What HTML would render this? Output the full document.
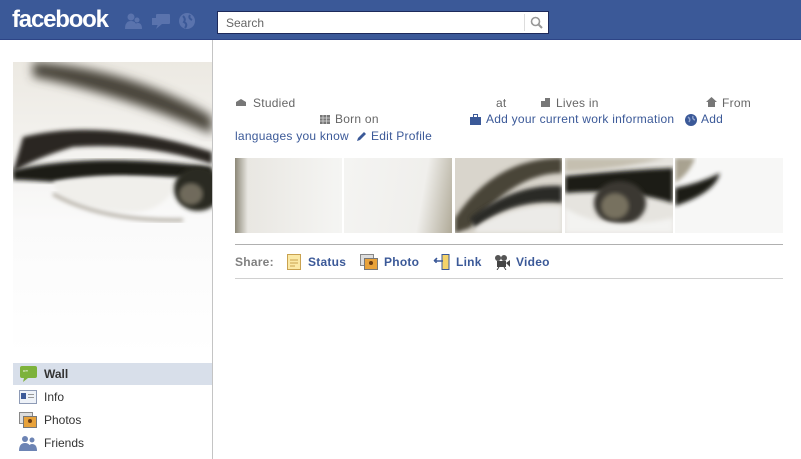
<!DOCTYPE html>
<html><head><meta charset="utf-8"><style>
*{margin:0;padding:0;box-sizing:border-box}
body{width:801px;height:459px;overflow:hidden;background:#fff;font-family:"Liberation Sans","DejaVu Sans",sans-serif;font-size:12px;color:#333;position:relative}
.hdr{position:absolute;left:0;top:0;width:801px;height:40px;background:#3b5998;border-bottom:1px solid #2d4486}
.logo{position:absolute;left:12px;top:6px;color:#fff;font-weight:bold;font-size:24px;letter-spacing:-1.2px;font-family:"Liberation Sans",sans-serif}
.search{position:absolute;left:217px;top:11px;width:332px;height:23px;background:#fff;border:1px solid #1d2a5b}
.search span{position:absolute;left:8px;top:4px;color:#666;font-size:12px}
.vline{position:absolute;left:212px;top:40px;width:1px;height:419px;background:#c4c4c4}
.a{position:absolute;white-space:nowrap;font-size:12px;letter-spacing:0.25px}
.link{color:#3b5998}
.g{color:#666}
.nav{position:absolute;left:13px;width:199px;height:22px;font-size:12px}
.nav span{position:absolute;left:31px;top:4px}
.ph{position:absolute;top:158px;height:75px;overflow:hidden}
</style></head><body>
<div class="hdr">
 <div class="logo">facebook</div>
 <svg style="position:absolute;left:122px;top:12px" width="80" height="20">
  <g fill="#5a73ad">
  <circle cx="9" cy="5" r="3.5"/><path d="M3 17 Q3 9 9 9 Q15 9 15 17Z"/><circle cx="15" cy="8" r="2.5"/><path d="M12 17 Q12 11 16 11 Q20 11 20 17Z"/>
  <rect x="34" y="2" width="14" height="10" rx="1"/><path d="M36 12 L34 17 L40 12Z"/><rect x="30" y="6" width="8" height="7"/>
  <circle cx="65" cy="9" r="8"/>
  </g>
  <path d="M61 4 Q64 7 62 10 Q66 12 63 16 M68 3 Q66 6 70 8" stroke="#3b5998" stroke-width="2" fill="none"/>
 </svg>
 <div class="search"><span>Search</span><div style="position:absolute;left:306px;top:2px;width:1px;height:17px;background:#ddd"></div>
 <svg style="position:absolute;left:312px;top:4px" width="14" height="14"><circle cx="5.5" cy="5.5" r="4" stroke="#999" stroke-width="1.6" fill="none"/><path d="M8.5 8.5 L12 12" stroke="#999" stroke-width="2"/></svg></div>
</div>
<div class="vline"></div>

<svg style="position:absolute;left:13px;top:62px" width="199" height="293">
 <defs><filter id="b"><feGaussianBlur stdDeviation="5"/></filter><filter id="b2"><feGaussianBlur stdDeviation="2"/></filter>
 <linearGradient id="sk" x1="0" y1="0" x2="0" y2="1"><stop offset="0" stop-color="#ece9e2"/><stop offset=".55" stop-color="#fafafa"/><stop offset="1" stop-color="#fff"/></linearGradient></defs>
 <rect width="199" height="293" fill="url(#sk)"/>
 <path d="M20 0 Q90 5 150 30 Q185 45 199 55 L199 72 Q150 50 100 35 Q50 20 20 15Z" fill="#4a443a" filter="url(#b)"/>
 <path d="M10 75 Q90 55 199 90 L199 102 Q130 80 60 85 Q25 95 0 110 Z" fill="#2a2722" filter="url(#b2)"/>
 <path d="M0 108 Q80 90 199 105 L199 118 Q120 110 40 120 Q10 118 0 118Z" fill="#1e1c18" filter="url(#b2)"/>
 <path d="M40 120 Q100 108 165 120 Q150 150 120 150 Q80 150 45 132Z" fill="#f0efeb" filter="url(#b2)"/>
 <ellipse cx="185" cy="127" rx="24" ry="22" fill="#2b2a24" filter="url(#b2)"/>
 <ellipse cx="178" cy="132" rx="12" ry="11" fill="#6f6a5c" filter="url(#b2)"/>
 <path d="M40 132 Q90 160 170 158" stroke="#a8a296" stroke-width="3" fill="none" filter="url(#b2)"/>
</svg>

<div class="nav" style="top:363px;background:#d8dfea"><svg style="position:absolute;left:7px;top:3px" width="17" height="17"><rect x="0" y="0" width="17" height="12" rx="2" fill="#7db23b"/><path d="M4 12 L3 16 L8 12Z" fill="#7db23b"/><text x="3" y="9" font-size="7" fill="#fff">“”</text></svg><span style="font-weight:bold;color:#333">Wall</span></div>
<div class="nav" style="top:386px"><svg style="position:absolute;left:6px;top:4px" width="18" height="14"><rect x=".5" y=".5" width="17" height="13" fill="#eef2f8" stroke="#8e9bb6"/><rect x="2" y="3" width="5" height="6" fill="#3b5998"/><rect x="9" y="4" width="6" height="1" fill="#999"/><rect x="9" y="7" width="6" height="1" fill="#999"/></svg><span>Info</span></div>
<div class="nav" style="top:409px"><svg style="position:absolute;left:6px;top:3px" width="18" height="16"><rect x=".5" y=".5" width="13" height="11" fill="#ddd" stroke="#888"/><rect x="4.5" y="4.5" width="13" height="11" fill="#e8a23a" stroke="#777"/><circle cx="11" cy="9" r="2" fill="#6b3b10"/></svg><span>Photos</span></div>
<div class="nav" style="top:432px"><svg style="position:absolute;left:6px;top:3px" width="18" height="16" fill="#6d84b4"><circle cx="6" cy="4" r="3"/><path d="M0 16 Q0 8 6 8 Q12 8 12 16Z"/><circle cx="13" cy="5" r="2.5"/><path d="M9 16 Q9 9 13 9 Q18 9 18 16Z"/></svg><span>Friends</span></div>

<svg style="position:absolute;left:235px;top:98px" width="12" height="10"><path d="M1 4 L6 1 L11 4 L11 8 L1 8Z" fill="#777"/></svg>
<div class="a g" style="left:253px;top:96px">Studied</div>
<div class="a g" style="left:496px;top:96px">at</div>
<svg style="position:absolute;left:540px;top:97px" width="11" height="11"><path d="M1 10 L1 4 L5 4 L5 1 L10 1 L10 10Z" fill="#777"/></svg>
<div class="a g" style="left:556px;top:96px">Lives in</div>
<svg style="position:absolute;left:706px;top:97px" width="11" height="11"><path d="M0 5 L5.5 0 L11 5 L9 5 L9 10 L2 10 L2 5Z" fill="#777"/></svg>
<div class="a g" style="left:722px;top:96px">From</div>
<svg style="position:absolute;left:320px;top:115px" width="10" height="9"><rect width="10" height="9" fill="#777"/><path d="M0 3H10M0 6H10M3 0V9M6.5 0V9" stroke="#ddd" stroke-width=".7"/></svg>
<div class="a g" style="left:335px;top:112px">Born on</div>
<svg style="position:absolute;left:470px;top:114px" width="11" height="11"><rect x="0" y="3" width="11" height="8" fill="#3b5998"/><rect x="3.5" y=".5" width="4" height="3" fill="none" stroke="#3b5998"/></svg>
<div class="a link" style="left:486px;top:112px">Add your current work information</div>
<svg style="position:absolute;left:685px;top:114px" width="12" height="12"><circle cx="6" cy="6" r="6" fill="#3b5998"/><path d="M3 3 Q6 5 4 8 M8 2 Q7 5 10 6" stroke="#8fa3cc" stroke-width="1.5" fill="none"/></svg>
<div class="a link" style="left:701px;top:112px">Add</div>
<div class="a link" style="left:235px;top:129px">languages you know</div>
<svg style="position:absolute;left:356px;top:131px" width="11" height="11"><path d="M1 10 L2 7 L8 1 L10 3 L4 9Z" fill="#3b5998"/></svg>
<div class="a link" style="left:371px;top:129px">Edit Profile</div>

<div class="ph" style="left:235px;width:107px;background:linear-gradient(90deg,#8c8878 0,#e9e7e2 12%,#f5f5f3 100%)"></div>
<div class="ph" style="left:344px;width:108px;background:linear-gradient(100deg,#f4f4f2 0,#f0efec 70%,#b0aa98 100%)"></div>
<div class="ph" style="left:455px;width:107px;background:#d9d5cc"><svg width="107" height="75"><defs><filter id="c"><feGaussianBlur stdDeviation="2"/></filter></defs><path d="M0 60 Q40 0 107 0 L107 15 Q60 15 15 70 L0 75Z" fill="#4a4538" filter="url(#c)"/><path d="M15 60 Q60 25 107 28 L107 45 Q60 40 20 70Z" fill="#2a2a26" filter="url(#c)"/><path d="M20 70 Q60 45 107 48 L107 75 L20 75Z" fill="#ecebe8" filter="url(#c)"/></svg></div>
<div class="ph" style="left:565px;width:108px;background:#e6e4df"><svg width="108" height="75"><defs><filter id="d"><feGaussianBlur stdDeviation="2"/></filter></defs><path d="M0 18 Q60 12 108 10 L108 45 Q60 30 0 35Z" fill="#1c1b18" filter="url(#d)"/><path d="M0 0 L100 0 Q50 12 0 14Z" fill="#c5bfb0" filter="url(#d)"/><ellipse cx="55" cy="45" rx="26" ry="22" fill="#3a3830" filter="url(#d)"/><ellipse cx="50" cy="48" rx="14" ry="13" fill="#77715f" filter="url(#d)"/><path d="M0 50 Q40 75 108 60 L108 75 L0 75Z" fill="#f3f3f1" filter="url(#d)"/></svg></div>
<div class="ph" style="left:675px;width:108px;background:#f7f7f6"><svg width="108" height="75"><defs><filter id="e"><feGaussianBlur stdDeviation="2"/></filter></defs><path d="M0 0 L20 0 Q15 15 0 25Z" fill="#a8a290" filter="url(#e)"/><path d="M0 30 Q25 25 45 15 Q40 35 0 48Z" fill="#1e1c19" filter="url(#e)"/></svg></div>

<div style="position:absolute;left:235px;top:244px;width:548px;height:1px;background:#b0b0b0"></div>
<div class="a" style="left:235px;top:255px;color:#808080;font-weight:bold">Share:</div>
<svg style="position:absolute;left:287px;top:254px" width="15" height="16"><rect x=".5" y=".5" width="13" height="15" fill="#fbe9a6" stroke="#c9a250"/><path d="M3 6H11M3 9H11M3 12H8" stroke="#c9a250"/></svg>
<div class="a link" style="left:308px;top:255px;font-weight:bold">Status</div>
<svg style="position:absolute;left:360px;top:254px" width="18" height="16"><rect x=".5" y=".5" width="13" height="11" fill="#ddd" stroke="#888"/><rect x="4.5" y="4.5" width="13" height="11" fill="#e8a23a" stroke="#777"/><circle cx="11" cy="9" r="2" fill="#6b3b10"/></svg>
<div class="a link" style="left:384px;top:255px;font-weight:bold">Photo</div>
<svg style="position:absolute;left:433px;top:254px" width="18" height="16"><rect x="9" y=".5" width="7" height="15" fill="#f4d36a" stroke="#3b5998"/><path d="M1 7H10 M3 5 L3 9 M1 7 L4 4" stroke="#3b5998" stroke-width="1.5" fill="none"/></svg>
<div class="a link" style="left:456px;top:255px;font-weight:bold">Link</div>
<svg style="position:absolute;left:493px;top:254px" width="18" height="16"><circle cx="5" cy="4" r="3" fill="#555"/><circle cx="11" cy="4" r="3" fill="#555"/><rect x="4" y="7" width="9" height="6" fill="#444"/><path d="M13 9 L17 6 L17 13Z" fill="#444"/><path d="M6 13 L4 16 M11 13 L13 16" stroke="#444"/></svg>
<div class="a link" style="left:516px;top:255px;font-weight:bold">Video</div>
<div style="position:absolute;left:235px;top:278px;width:548px;height:1px;background:#d0d0d0"></div>
</body></html>
